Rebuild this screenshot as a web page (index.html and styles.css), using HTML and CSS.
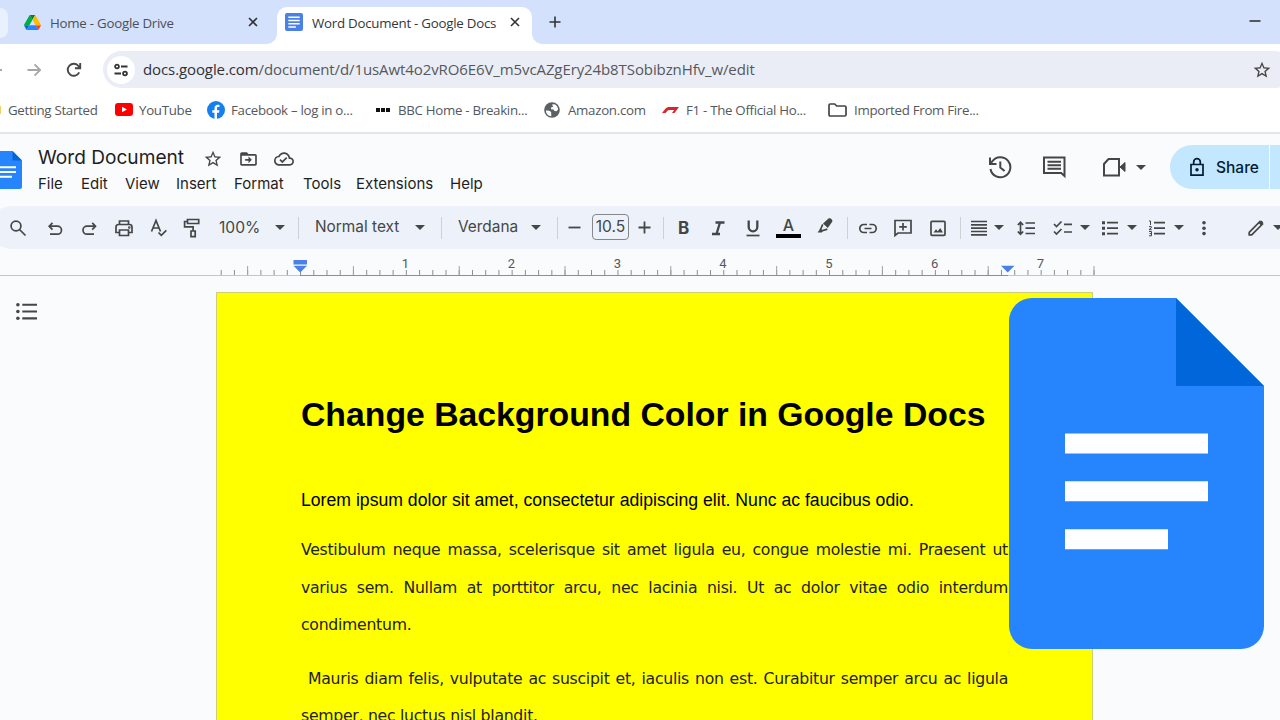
FILE: index.html
```html
<!DOCTYPE html>
<html lang="en">
<head>
    <meta charset="UTF-8">
    <meta name="viewport" content="width=device-width, initial-scale=1.0">
    <title>Word Document - Google Docs</title>
    <link rel="stylesheet" href="styles.css">
</head>
<body>
    <!-- Browser tabs -->
    <div class="tabs">
        <div class="tab-edge"></div>
        <div class="tab">
            <svg class="drive" viewBox="0 0 87.3 78"><path fill="#0066da" d="m6.6 66.85 3.85 6.65c.8 1.4 1.95 2.5 3.3 3.3l13.75-23.8h-27.5c0 1.55.4 3.1 1.2 4.5z"/><path fill="#00ac47" d="m43.65 25-13.75-23.8c-1.35.8-2.5 1.9-3.3 3.3l-25.4 44a9.06 9.06 0 0 0 -1.2 4.5h27.5z"/><path fill="#ea4335" d="m73.55 76.8c1.35-.8 2.5-1.9 3.3-3.3l1.6-2.75 7.65-13.25c.8-1.4 1.2-2.95 1.2-4.5h-27.5l5.85 11.5z"/><path fill="#00832d" d="m43.65 25 13.75-23.8c-1.35-.8-2.9-1.2-4.5-1.2h-18.5c-1.6 0-3.15.45-4.5 1.2z"/><path fill="#2684fc" d="m59.8 53h-32.3l-13.75 23.8c1.35.8 2.9 1.2 4.5 1.2h50.8c1.6 0 3.15-.45 4.5-1.2z"/><path fill="#ffba00" d="m73.4 26.5-12.7-22c-.8-1.4-1.95-2.5-3.3-3.3l-13.75 23.8 16.15 28h27.45c0-1.55-.4-3.1-1.2-4.5z"/></svg>
            <span class="tab-title">Home - Google Drive</span>
            <svg class="close" viewBox="0 0 10 10"><path d="M1 1l8 8M9 1L1 9"/></svg>
        </div>
        <div class="tab active">
            <svg class="doc-icon" viewBox="0 0 18 18"><rect width="18" height="18" rx="2" fill="#4a80e8"/><path d="M3.3 4.3h11.4M3.3 7.5h11.4M3.3 10.7h11.4M3.3 13.9h7.6" stroke="#fff" stroke-width="1.5"/></svg>
            <span class="tab-title">Word Document - Google Docs</span>
            <svg class="close" viewBox="0 0 10 10"><path d="M1 1l8 8M9 1L1 9"/></svg>
        </div>
        <svg class="new-tab" viewBox="0 0 12 12"><path d="M6 .5v11M.5 6h11"/></svg>
        <svg class="minimize" viewBox="0 0 12 12"><path d="M.5 6h11"/></svg>
    </div>

    <!-- Address bar -->
    <div class="address">
        <svg class="back" viewBox="0 0 4 14"><path d="M0 7h2"/></svg>
        <svg class="forward" viewBox="0 0 14 14"><path d="M.5 7h12.500M7.500 1.300l5.700 5.700-5.700 5.700"/></svg>
        <svg class="reload" viewBox="0 0 16 16"><path d="M13.200 10.300A6 6 0 1 1 12.600 4.200L14 5.800M14.200 1v5.300H9"/></svg>
        <div class="url">
            <div class="site-info">
                <svg viewBox="0 0 16 14"><circle cx="4" cy="3.500" r="1.900"/><path d="M8 3.500h6.500M1.500 10.500H8"/><circle cx="12" cy="10.500" r="1.900"/></svg>
            </div>
            <span class="url-text"><b>docs.google.com</b>/document/d/1usAwt4o2vRO6E6V_m5vcAZgEry24b8TSobibznHfv_w/edit</span>
            <svg class="bookmark-star" viewBox="0 0 24 24"><path d="M22 9.240l-7.190-.62L12 2 9.190 8.630 2 9.240l5.460 4.730L5.820 21 12 17.270 18.180 21l-1.630-7.030L22 9.240zM12 15.400l-3.760 2.270 1-4.280-3.320-2.880 4.380-.38L12 6.100l1.710 4.040 4.380.38-3.320 2.880 1 4.280L12 15.400z"/></svg>
        </div>
    </div>

    <!-- Bookmarks -->
    <div class="bookmarks">
        <span class="ball"></span>
        <span class="bm">Getting Started</span>
        <svg width="18" height="13" viewBox="0 0 18 13"><rect width="18" height="13" rx="3" fill="#f00"/><path d="M7 3.700v5.600l5-2.800z" fill="#fff"/></svg>
        <span class="bm">YouTube</span>
        <svg width="18" height="18" viewBox="0 0 18 18"><circle cx="9" cy="9" r="9" fill="#1480f0"/><path d="M7.500 18v-6.200H5.300V9.200h2.200V7.500c0-2.500 1.300-3.700 3.300-3.700.8 0 1.500.1 1.700.1v2.200h-1.200c-1 0-1.300.5-1.300 1.300v1.800h2.400l-.4 2.600h-2V18z" fill="#fff"/></svg>
        <span class="bm">Facebook – log in o...</span>
        <svg width="14" height="4" viewBox="0 0 14 4"><path d="M0 0h4v4H0zM5 0h4v4H5zM10 0h4v4h-4z" fill="#111"/></svg>
        <span class="bm">BBC Home - Breakin...</span>
        <svg width="16" height="16" viewBox="0 0 16 16"><circle cx="8" cy="8" r="7.800" fill="#5c6064"/><path d="M2 8.500c2 0 4.200 0 5 1.500s-.5 1.500.3 2.500v1.800C4 14 1.800 11.500 2 8.500zM8 2.500l2.500-.3c2 .8 3.500 2.800 3.600 5.300l-1.600 1.700-2-.2-1-1.500-2.500-.2.2-2 2-.3z" fill="#fff"/></svg>
        <span class="bm">Amazon.com</span>
        <svg width="17" height="6" viewBox="0 0 17 6"><path d="M0 6l3.400-4.200C4.500.5 5.500 0 7.500 0h9.500l-4.500 6H10l2.200-3H7.500c-1 0-1.500.3-2.200 1L3.500 6z" fill="#d9252a"/></svg>
        <span class="bm">F1 - The Official Ho...</span>
        <svg width="19" height="14" viewBox="0 0 19 14"><path d="M1 2.200C1 1.400 1.500 1 2.200 1h4.500l2 2h8c.8 0 1.300.5 1.300 1.200v7.600c0 .8-.5 1.200-1.300 1.200H2.200C1.500 13 1 12.600 1 11.800z" fill="none" stroke="#444" stroke-width="1.700"/></svg>
        <span class="bm">Imported From Fire...</span>
    </div>

    <!-- Docs header -->
    <header class="header">
        <svg class="logo" viewBox="0 0 22 38"><path d="M-8 0H12.500L22 9.500V35.500A2.500 2.500 0 0 1 19.500 38H-8z" fill="#2684fc"/><path d="M12.500 0L22 9.500H12.500z" fill="#0066da"/><path d="M0 16.300h16M0 21h16M0 25.800h12" stroke="#fff" stroke-width="2"/></svg>
        <div class="titles">
            <div class="name-row">
                <span class="doc-name">Word Document</span>
                <svg width="20" height="20" viewBox="0 0 24 24"><path d="M22 9.240l-7.190-.62L12 2 9.190 8.630 2 9.240l5.460 4.730L5.820 21 12 17.270 18.180 21l-1.630-7.030L22 9.240zM12 15.400l-3.760 2.270 1-4.280-3.320-2.880 4.380-.38L12 6.100l1.710 4.040 4.380.38-3.320 2.880 1 4.280L12 15.400z"/></svg>
                <svg width="21" height="20" viewBox="0 0 24 24"><path d="M20 6h-8l-2-2H4c-1.100 0-2 .9-2 2v12c0 1.100.9 2 2 2h16c1.100 0 2-.9 2-2V8c0-1.100-.9-2-2-2zm0 12H4V8h16v10zm-8-1l4-4-4-4v3H8v2h4z"/></svg>
                <svg width="20" height="20" viewBox="0 0 24 24"><path d="M19.350 10.040C18.670 6.590 15.640 4 12 4 9.110 4 6.610 5.640 5.360 8.040 2.350 8.360 0 10.900 0 14c0 3.310 2.690 6 6 6h13c2.760 0 5-2.240 5-5 0-2.640-2.050-4.780-4.650-4.960zM19 18H6c-2.210 0-4-1.790-4-4 0-2.050 1.530-3.760 3.560-3.970l1.070-.11.5-.95C8.080 7.140 9.940 6 12 6c2.620 0 4.880 1.860 5.390 4.430l.3 1.500 1.530.11c1.560.1 2.780 1.410 2.780 2.960 0 1.650-1.350 3-3 3zm-9-3.820l-2.090-2.090L6.500 13.500 10 17l6.010-6.010-1.410-1.410z"/></svg>
            </div>
            <div class="menu">
                <span>File</span><span>Edit</span><span>View</span><span>Insert</span><span>Format</span><span>Tools</span><span>Extensions</span><span>Help</span>
            </div>
        </div>
        <div class="actions">
            <svg width="24" height="24" viewBox="0 0 24 24" class="line"><path d="M2.500 14A10 10 0 1 0 4.200 6.500L2 9M2 2.500V9h6.500M12.300 6.500v6l4.300 3.500"/></svg>
            <svg width="24" height="24" viewBox="0 0 24 24" class="line"><path d="M2 2.500h20.500V21l-3.300-3H2zM5.500 6.700h13.500M5.500 10.200h13.500M5.500 13.700h13.500"/></svg>
            <svg width="24" height="24" viewBox="0 0 24 24" class="line"><path d="M6.500 4H17v16.500H2V9z"/><path d="M18 12l5-4.500v9z" fill="#444746" stroke-width="1"/></svg>
            <i class="caret"></i>
            <div class="share">
                <svg width="16" height="20" viewBox="0 0 16 20"><path d="M2 7.500h12v10.700H2zM4.700 7.500V5a3.300 3.300 0 0 1 6.600 0v2.500" fill="none" stroke="#001d35" stroke-width="1.700"/><circle cx="8" cy="12.800" r="1.700" fill="#001d35"/></svg>
                <span>Share</span>
            </div>
            <div class="share-more"></div>
        </div>
    </header>

    <!-- Toolbar -->
    <div class="toolbar">
        <svg class="ic" viewBox="0 0 20 20"><circle cx="8" cy="8" r="4.900"/><path d="M11.500 11.500l6 6"/></svg>
        <svg class="ic" viewBox="0 0 20 20"><path d="M5 16.200h7.500a4 4 0 0 0 0-8H4.200M7.500 4.800L4.200 8.200l3.300 3.400"/></svg>
        <svg class="ic" viewBox="0 0 20 20"><path d="M15 16.200H8a4 4 0 0 1 0-8h8.500M13.200 4.800l3.300 3.400-3.300 3.400"/></svg>
        <svg class="ic" viewBox="0 0 20 20"><path d="M5.500 6.500V3h9v3.500M5.500 14.500H2V9c0-1.500 1-2.500 2.500-2.500h11C17 6.500 18 7.500 18 9v5.500h-3.500M5.500 12h9v5.500h-9z"/><circle cx="15.300" cy="9.500" r=".5"/></svg>
        <svg class="ic" viewBox="0 0 20 20"><path d="M2.500 13.500L7 2.500l4.500 11M4 10h6M9.500 14.500l2.800 2.800 5-5"/></svg>
        <svg class="ic" viewBox="0 0 20 20"><path d="M5.500 1.500h11.200v4H5.500zM5.500 3.500H2.600v5.300h8.500v3.700M9 13h4.200v5.700H9z"/></svg>
        <span class="zoom-level">100%</span>
        <i class="caret"></i>
        <i class="sep"></i>
        <span class="pick">Normal text</span>
        <i class="caret"></i>
        <i class="sep"></i>
        <span class="pick">Verdana</span>
        <i class="caret"></i>
        <i class="sep"></i>
        <svg class="sm" viewBox="0 0 13 13"><path d="M.5 6.500h12"/></svg>
        <span class="size">10.5</span>
        <svg class="sm" viewBox="0 0 13 13"><path d="M.5 6.500h12M6.500 .5v12"/></svg>
        <i class="sep"></i>
        <span class="bold">B</span>
        <svg class="ic thick" viewBox="0 0 20 20"><path d="M7.500 4.500h9M4 16h8M12 4.500L8.500 16"/></svg>
        <svg class="ic" viewBox="0 0 20 20"><path class="heavy" d="M5.700 2.500v6.500a4.300 4.300 0 0 0 8.600 0V2.500"/><path d="M3.500 17.500h13"/></svg>
        <div class="text-color"><span>A</span></div>
        <svg class="ic pen" viewBox="0 0 20 20"><path d="M7.800 8.300l-2.300 5.200 1.500 1.300 5.300-1.700"/><path class="fill" d="M8 7.500l5.500-5c1.600-1.200 4.800 1.400 3.700 3.300L12.800 12zM2.500 16.500l2.500-3.200 2.600 1.900-.8 1.300z"/></svg>
        <i class="sep"></i>
        <svg class="ic" viewBox="0 0 20 20"><path d="M9 6.500H5.800a4 4 0 0 0 0 8H9M11.500 6.500h2.700a4 4 0 0 1 0 8h-2.700M6.500 10.500h7"/></svg>
        <svg class="ic" viewBox="0 0 20 20"><path d="M2 2.500h16v12.500H5l-3 2.500zM10 5v7.500M6.200 8.800h7.600"/></svg>
        <svg class="ic" viewBox="0 0 20 20"><rect x="3" y="3.300" width="14" height="14" rx="1"/><path class="fill" d="M5.500 14.500l2.500-3.300 1.800 2 2.400-3.200 2.800 4.500z"/></svg>
        <i class="sep"></i>
        <svg class="ic" viewBox="0 0 20 20"><path d="M2 3.500h16M2 6.800h16M2 10.200h16M2 13.500h16M2 16.900h16"/></svg>
        <i class="caret"></i>
        <svg class="ic" viewBox="0 0 20 20"><path d="M9.500 5h9.500M9.500 10.200h9.500M9.500 15.500h9.500M4.500 4.500v11.500M1.800 7l2.700-2.700L7.200 7M1.800 13.500l2.700 2.700 2.700-2.700"/></svg>
        <svg class="ic" viewBox="0 0 20 20"><path d="M11 6.300h8M11 14h8M1 6l2.500 2.500 5-5M1 13.500L3.500 16l5-5"/></svg>
        <i class="caret"></i>
        <svg class="ic" viewBox="0 0 20 20"><path d="M7 4.700h11M7 10.200h11M7 15.700h11"/><path class="fill" d="M2 3.200h3v3H2zM2 8.700h3v3H2zM2 14.200h3v3H2z"/></svg>
        <i class="caret"></i>
        <svg class="ic" viewBox="0 0 20 20"><path d="M7 4.700h11M7 10.200h11M7 15.700h11"/><path class="thin" d="M2 3h1.500v4M2 8.600h2.300v1.200L2 11.700h2.700M2 13.500h2.500v4.300H2M2.500 15.600h2"/></svg>
        <i class="caret"></i>
        <svg class="ic" viewBox="0 0 20 20"><g class="fill"><circle cx="10" cy="4.700" r="1.800"/><circle cx="10" cy="10.200" r="1.800"/><circle cx="10" cy="15.600" r="1.800"/></g></svg>
        <svg class="ic" viewBox="0 0 20 20"><path d="M3.200 16.800v-2.500L14 3.500l2.500 2.500L5.700 16.800z"/><path class="fill" d="M12.500 5l2.300-2c.8-.8 3 1.200 2.200 2.200l-2 2.300z"/></svg>
        <i class="caret"></i>
    </div>

    <!-- Ruler -->
    <svg class="ruler" width="1280" height="27" viewBox="0 249 1280 27">
        <path d="M0 275.500H1280" stroke="#c4c7c9"/>
        <path d="M300 275.500H1008" stroke="#8c8f91"/>
        <path d="M220.700 272.500H1095" stroke="#8c8f91" stroke-width="5" stroke-dasharray="1 12.225"/>
        <path d="M247.100 270.500H1095" stroke="#a0a3a5" stroke-width="9" stroke-dasharray="1 104.800"/>
        <path d="M293.500 260h13.500v4.500h-13.500zM293.500 265.700h13.500l-6.750 6.800zM1001 265.700h13.500l-6.750 6.800z" fill="#4a80e8"/>
        <g class="inches">
            <text x="405.500" y="268">1</text>
            <text x="511.500" y="268">2</text>
            <text x="617.300" y="268">3</text>
            <text x="723" y="268">4</text>
            <text x="829" y="268">5</text>
            <text x="934.600" y="268">6</text>
            <text x="1040.500" y="268">7</text>
        </g>
    </svg>

    <!-- Document -->
    <main class="workspace">
        <svg class="outline" viewBox="0 0 20 18"><path d="M6 2.500h14M6 9h14M6 15.500h14" stroke="#444746" stroke-width="2"/><g fill="#444746"><circle cx="1.800" cy="2.500" r="1.700"/><circle cx="1.800" cy="9" r="1.700"/><circle cx="1.800" cy="15.500" r="1.700"/></g></svg>
        <article class="page">
            <h1>Change Background Color in Google Docs</h1>
            <p class="lead">Lorem ipsum dolor sit amet, consectetur adipiscing elit. Nunc ac faucibus odio.</p>
            <p class="para">Vestibulum neque massa, scelerisque sit amet ligula eu, congue molestie mi. Praesent ut varius sem. Nullam at porttitor arcu, nec lacinia nisi. Ut ac dolor vitae odio interdum condimentum.</p>
            <p class="para indent">Mauris diam felis, vulputate ac suscipit et, iaculis non est. Curabitur semper arcu ac ligula semper, nec luctus nisl blandit.</p>
        </article>
    </main>

    <!-- Big logo on top of the page -->
    <svg class="big-logo" viewBox="0 0 255 351"><path d="M23 0H167L255 88V328A23 23 0 0 1 232 351H23A23 23 0 0 1 0 328V23A23 23 0 0 1 23 0z" fill="#2684fc"/><path d="M167 0L255 88H167z" fill="#0066da"/><path d="M56 135.500h143v20H56zM56 183.300h143v20H56zM56 231.300h103v20H56z" fill="#fff"/></svg>
</body>
</html>
```
FILE: styles.css
```css
* {
    margin: 0;
    padding: 0;
    box-sizing: border-box;
}

body {
    width: 1280px;
    height: 720px;
    overflow: hidden;
    position: relative;
    background-color: #f9fbfd;
    font-family: Inter, Roboto, sans-serif;
    color: #444746;
}

svg {
    display: block;
    flex-shrink: 0;
}

/* Browser tabs */
.tabs {
    display: flex;
    height: 44px;
    background-color: #d3e1fd;
    font-family: "Open Sans", "Noto Sans", sans-serif;
    font-size: 13.3px;
    letter-spacing: -0.25px;
}

.tab-edge {
    width: 8px;
    height: 30px;
    margin-top: 8px;
    background-color: #e9f0fe;
    border-radius: 0 8px 8px 0;
}

.tab {
    display: grid;
    grid-template-columns: 26px 198px 10px;
    align-items: center;
    width: 269px;
    height: 44px;
    padding-left: 16px;
    color: #4b5058;
}

.tab.active {
    position: relative;
    grid-template-columns: 27px 198px 10px;
    width: 255px;
    height: 37px;
    margin-top: 7px;
    padding: 0 0 7px 8px;
    background-color: #fff;
    border-radius: 10px 10px 0 0;
    color: #33373c;
}

/* Curved feet of the active tab */
.tab.active::before,
.tab.active::after {
    content: "";
    position: absolute;
    bottom: 0;
    width: 10px;
    height: 10px;
}

.tab.active::before {
    left: -10px;
    background: radial-gradient(circle at 0 0, transparent 9.5px, #fff 10px);
}

.tab.active::after {
    right: -10px;
    background: radial-gradient(circle at 100% 0, transparent 9.5px, #fff 10px);
}

.tab-title {
    padding-top: 2px;
    white-space: nowrap;
    line-height: 18px;
}

.drive {
    width: 17px;
    height: 15px;
}

.doc-icon {
    width: 18px;
    height: 18px;
}

.close {
    width: 10px;
    height: 10px;
    stroke: #333;
    stroke-width: 1.6;
}

.new-tab,
.minimize {
    width: 12px;
    height: 12px;
    margin-top: 16px;
    margin-left: 17px;
    stroke: #333;
    stroke-width: 1.6;
}

.minimize {
    margin-left: auto;
    margin-right: 19px;
    margin-top: 15px;
}

/* Address bar */
.address {
    display: grid;
    grid-template-columns: 27px 39px 37px 1177px;
    align-items: center;
    height: 51px;
    background-color: #fff;
    fill: none;
}

.back {
    width: 4px;
    height: 14px;
    stroke: #aaa;
    stroke-width: 2;
}

.forward {
    width: 14px;
    height: 14px;
    stroke: #a5a7a9;
    stroke-width: 1.8;
}

.reload {
    width: 16px;
    height: 16px;
    stroke: #474747;
    stroke-width: 1.9;
}

.url {
    display: grid;
    grid-template-columns: 36px 1109px 20px;
    align-items: center;
    width: 1190px;
    height: 37px;
    padding-left: 4px;
    background-color: #eaedf6;
    border-radius: 19px;
}

.site-info {
    display: flex;
    align-items: center;
    justify-content: center;
    width: 28px;
    height: 28px;
    background-color: #fff;
    border-radius: 50%;
}

.site-info svg {
    width: 16px;
    height: 14px;
    stroke: #333;
    stroke-width: 1.8;
}

.url-text {
    padding-bottom: 2px;
    font-family: "Open Sans", "Noto Sans", sans-serif;
    font-size: 15px;
    letter-spacing: -0.1px;
    white-space: nowrap;
    color: #55585c;
}

.url-text b {
    font-weight: normal;
    color: #303236;
}

.bookmark-star {
    width: 20px;
    height: 20px;
    fill: #444;
}

/* Bookmarks bar */
.bookmarks {
    display: grid;
    grid-template-columns: 8px 107px 24px 68px 24px 145px 22px 146px 24px 94px 24px 142px 26px 130px;
    align-items: center;
    height: 39px;
    padding-bottom: 8px;
    background-color: #fff;
    border-bottom: 2px solid #e3e6e7;
}

.bm {
    font-family: "Open Sans", "Noto Sans", sans-serif;
    font-size: 13.3px;
    letter-spacing: -0.3px;
    white-space: nowrap;
    color: #55585c;
}

.ball {
    width: 1px;
    height: 8px;
    background-color: #f3cf63;
}

/* Docs header */
.header {
    display: flex;
    height: 72px;
}

.logo {
    width: 22px;
    height: 38px;
    margin-top: 17px;
}

.titles {
    width: 966px;
    flex-shrink: 0;
    padding: 11px 0 0 16px;
}

.name-row {
    display: grid;
    grid-template-columns: 165px 35px 36px 20px;
    align-items: center;
    height: 26px;
    fill: #444746;
}

.doc-name {
    padding-bottom: 3px;
    font-size: 19.1px;
    color: #1f1f1f;
    white-space: nowrap;
}

.menu {
    display: grid;
    grid-template-columns: 43px 44px 51px 58px 69px 53px 94px 40px;
    font-size: 15px;
    line-height: 20px;
    padding-top: 3px;
    color: #1f1f1f;
}

.actions {
    display: grid;
    grid-template-columns: 54px 60px 34px 34px 99px 20px;
    align-items: center;
    height: 44px;
    margin-top: 11px;
}

.line {
    fill: none;
    stroke: #444746;
    stroke-width: 2;
}

.share {
    display: flex;
    align-items: center;
    width: 99px;
    height: 44px;
    padding-left: 19px;
    gap: 11px;
    background-color: #c2e7ff;
    border-radius: 22px 0 0 22px;
    font-size: 15.5px;
    font-weight: 500;
    color: #001d35;
}

.share-more {
    height: 44px;
    margin-left: 1px;
    background-color: #c2e7ff;
}

/* Toolbar */
.toolbar {
    display: grid;
    grid-template-columns: 37px 34px 35px 35px 33px 37px 56px 23px 17px 100px 26px 17px 73px 26px 11px 24px 46px 25px 10.5px 34.5px 35px 33px 39px 32px 11px 35px 34.5px 32.5px 9px 25px 22px 37px 27px 20px 27px 20px 27px 20px 52px 27px 10px;
    align-items: center;
    width: 1310px;
    height: 43px;
    margin-left: -10px;
    padding-left: 18px;
    background-color: #edf1fa;
    border-radius: 22px;
    font-size: 15.6px;
    white-space: nowrap;
}

.pick {
    padding-bottom: 2px;
    font-size: 15.4px;
}

.ic {
    width: 20px;
    height: 20px;
    fill: none;
    stroke: #444746;
    stroke-width: 1.7;
}

.ic .fill {
    fill: #444746;
    stroke: none;
}

.ic .thin {
    stroke-width: 1;
}

.ic .heavy,
.thick {
    stroke-width: 2.3;
}

.pen {
    margin-bottom: 4px;
}

.sm {
    width: 13px;
    height: 13px;
    stroke: #444746;
    stroke-width: 1.8;
}

.caret {
    width: 10px;
    border: 5px solid transparent;
    border-top-color: #444746;
    border-bottom: none;
}

.sep {
    width: 1px;
    height: 22px;
    background-color: #cdd1d8;
}

.size {
    width: 37px;
    height: 26px;
    margin-bottom: 1px;
    border: 1px solid #85888a;
    border-radius: 4px;
    line-height: 24px;
    text-align: center;
}

.bold {
    width: 20px;
    font-size: 17px;
    font-weight: 700;
    text-align: center;
}

.text-color {
    width: 25px;
    height: 20px;
    border-bottom: 4px solid #000;
    font-size: 16px;
    font-weight: 500;
    line-height: 14px;
    text-align: center;
}

/* Ruler */
.inches {
    font-family: Roboto, sans-serif;
    font-size: 13px;
    text-anchor: middle;
    fill: #55585a;
}

/* Document */
.workspace {
    display: flex;
    align-items: flex-start;
    height: 444px;
    padding: 16px 0 0 16px;
}

.outline {
    width: 21px;
    height: 19px;
    margin: 10px 179px 0 0;
}

.page {
    width: 877px;
    height: 440px;
    padding: 99px 84px 0;
    background-color: #ffff00;
    border: 1px solid #cfcf7a;
    color: #000;
}

h1 {
    font-family: "Liberation Sans", Arial, sans-serif;
    font-size: 33.75px;
    line-height: 44px;
    white-space: nowrap;
}

.lead {
    margin-top: 53px;
    font-family: "Liberation Sans", Arial, sans-serif;
    font-size: 17.65px;
    line-height: 22px;
    white-space: nowrap;
}

.para {
    margin-top: 20px;
    font-family: "DejaVu Sans", Verdana, sans-serif;
    font-size: 15.7px;
    line-height: 37.5px;
    letter-spacing: -0.28px;
    text-align: justify;
    color: #222;
}

.para.indent {
    margin-top: 16px;
    text-indent: 7px;
}

.big-logo {
    position: absolute;
    left: 1009px;
    top: 298px;
    width: 255px;
    height: 351px;
}
```
